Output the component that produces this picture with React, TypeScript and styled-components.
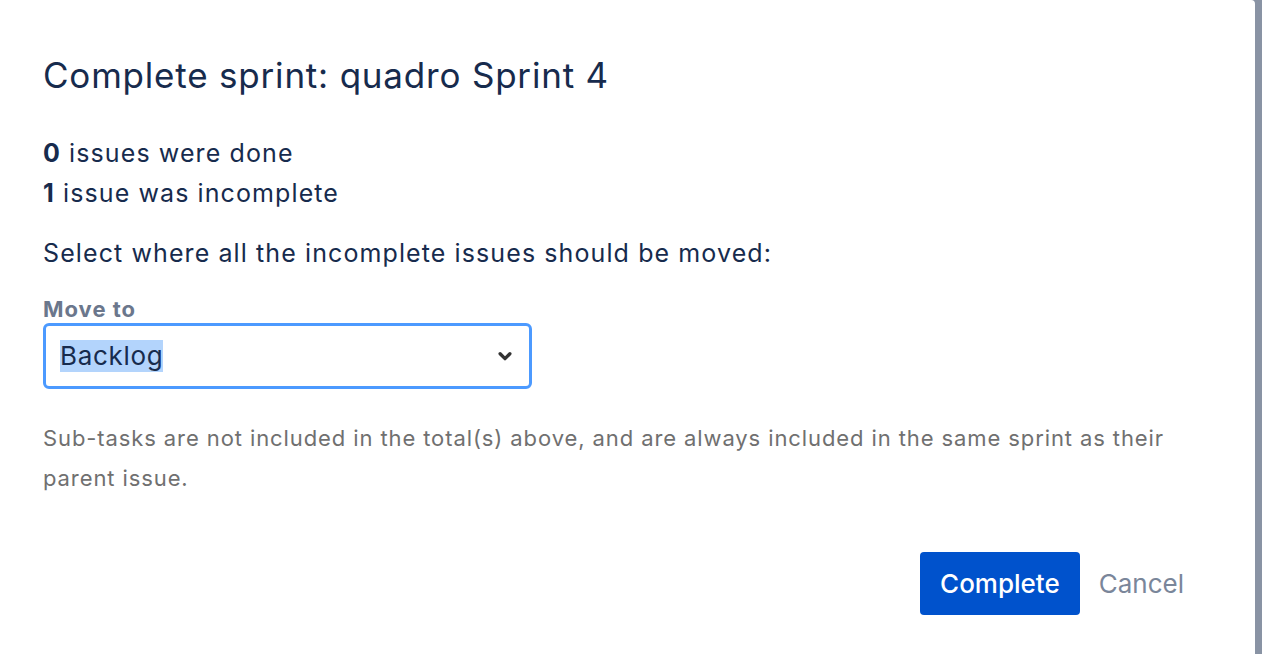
import styled, { createGlobalStyle } from "styled-components";

const GlobalStyle = createGlobalStyle`
  html, body {
    margin: 0;
    padding: 0;
    height: 100%;
    background: #8993a4;
  }
  #root {
    height: 100%;
  }
  * {
    box-sizing: border-box;
  }
`;

const Screen = styled.div`
  height: 654px;
  display: flex;
  padding-right: 7px;
  font-family: Inter, "Noto Sans", sans-serif;
  overflow: hidden;
`;

const Dialog = styled.div`
  flex: 1;
  background: #ffffff;
  border-top-right-radius: 4px;
  padding: 52px 43px 0 43px;
  display: flex;
  flex-direction: column;
`;

const Title = styled.h2`
  margin: 0;
  font-size: 35px;
  font-weight: 400;
  line-height: 46px;
  color: #172b4d;
  letter-spacing: 0.8px;
`;

const Summary = styled.div`
  margin-top: 35px;
  display: flex;
  flex-direction: column;
`;

const Line = styled.p`
  margin: 0;
  font-size: 25px;
  line-height: 40px;
  letter-spacing: 1.1px;
  color: #172b4d;
`;

const Count = styled.b`
  font-weight: 700;
`;

const Prompt = styled(Line)`
  margin-top: 20px;
`;

const Field = styled.div`
  margin-top: 22px;
  display: flex;
  flex-direction: column;
`;

const Label = styled.label`
  font-size: 22px;
  font-weight: 700;
  line-height: 28px;
  letter-spacing: 1px;
  color: #6b778c;
`;

const SelectBox = styled.div`
  margin-top: 0;
  width: 489px;
  height: 66px;
  border: 3px solid #4c9aff;
  border-radius: 6px;
  display: flex;
  align-items: center;
  justify-content: space-between;
  padding: 0 15px 0 14px;
`;

const Value = styled.span`
  font-size: 26px;
  line-height: 32px;
  letter-spacing: 0.7px;
  color: #172b4d;
  background: #b3d4fc;
`;

const Chevron = styled.svg`
  width: 18px;
  height: 18px;
`;

const Note = styled.p`
  margin: 29px 0 0 0;
  font-size: 22px;
  line-height: 40px;
  letter-spacing: 0.9px;
  color: #707070;
  max-width: 1130px;
`;

const Footer = styled.div`
  margin-top: 54px;
  display: flex;
  justify-content: flex-end;
  align-items: center;
  gap: 19px;
  padding-right: 28px;
`;

const PrimaryButton = styled.button`
  height: 63px;
  padding: 0 20px;
  border: none;
  border-radius: 4px;
  background: #0052cc;
  color: #ffffff;
  font-family: inherit;
  font-size: 26px;
  font-weight: 500;
`;

const LinkButton = styled.button`
  border: none;
  background: none;
  padding: 0;
  color: #7a869a;
  font-family: inherit;
  font-size: 26px;
`;

export default function App() {
  return (
    <>
      <GlobalStyle />
      <Screen>
        <Dialog>
          <Title>Complete sprint: quadro Sprint 4</Title>
          <Summary>
            <Line>
              <Count>0</Count> issues were done
            </Line>
            <Line>
              <Count>1</Count> issue was incomplete
            </Line>
          </Summary>
          <Prompt>Select where all the incomplete issues should be moved:</Prompt>
          <Field>
            <Label>Move to</Label>
            <SelectBox>
              <Value>Backlog</Value>
              <Chevron viewBox="0 0 24 24">
                <path
                  d="M5.5 9l6.5 6.5 6.5-6.5"
                  fill="none"
                  stroke="#333"
                  strokeWidth="4.4"
                  strokeLinecap="round"
                  strokeLinejoin="round"
                />
              </Chevron>
            </SelectBox>
          </Field>
          <Note>
            Sub-tasks are not included in the total(s) above, and are always included in the same sprint as
            their parent issue.
          </Note>
          <Footer>
            <PrimaryButton>Complete</PrimaryButton>
            <LinkButton>Cancel</LinkButton>
          </Footer>
        </Dialog>
      </Screen>
    </>
  );
}
